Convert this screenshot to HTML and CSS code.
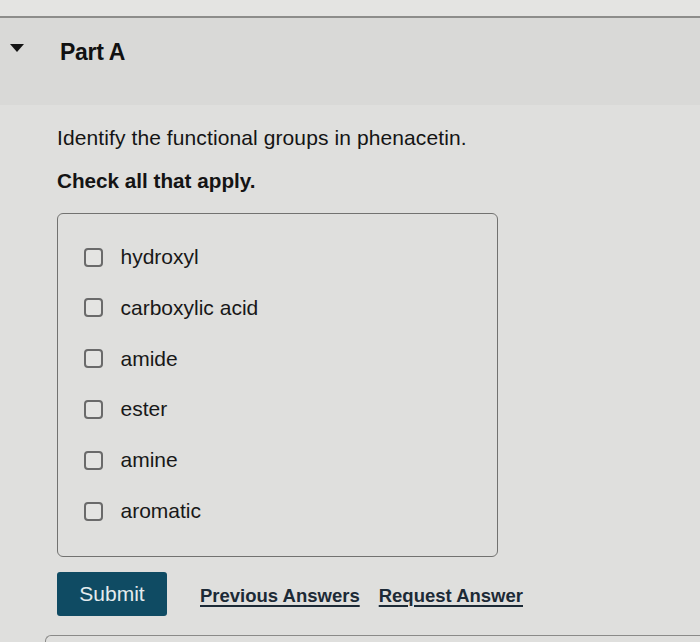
FILE: index.html
```html
<!DOCTYPE html>
<html>
<head>
<meta charset="utf-8">
<link rel="stylesheet" href="styles.css">
</head>
<body>
<div class="topstrip"></div>
<div class="header">
  <span class="caret"></span>
  <h2 class="title">Part A</h2>
</div>
<div class="content">
  <p class="question">Identify the functional groups in phenacetin.</p>
  <p class="instruction">Check all that apply.</p>
  <div class="options">
    <label class="option"><span class="box"></span><span class="label">hydroxyl</span></label>
    <label class="option"><span class="box"></span><span class="label">carboxylic acid</span></label>
    <label class="option"><span class="box"></span><span class="label">amide</span></label>
    <label class="option"><span class="box"></span><span class="label">ester</span></label>
    <label class="option"><span class="box"></span><span class="label">amine</span></label>
    <label class="option"><span class="box"></span><span class="label">aromatic</span></label>
  </div>
  <div class="actions">
    <button class="submit">Submit</button>
    <a class="link first" href="#">Previous Answers</a>
    <a class="link" href="#">Request Answer</a>
  </div>
  <div class="nextbox"></div>
</div>
</body>
</html>
```

FILE: styles.css
```css
html, body {
  margin: 0;
  padding: 0;
}
body {
  width: 700px;
  height: 642px;
  overflow: hidden;
  background: #dfdfdd;
  font-family: "Liberation Sans", Arial, sans-serif;
  color: #141414;
}
.topstrip {
  height: 16px;
  background: #e4e4e2;
  border-bottom: 2px solid #8d8d8b;
}
.header {
  height: 87px;
  box-sizing: border-box;
  padding: 21px 0 0 10px;
  display: flex;
  align-items: flex-start;
  background: #d9d9d7;
}
.caret {
  width: 0;
  height: 0;
  margin-top: 5px;
  border-left: 7px solid transparent;
  border-right: 7px solid transparent;
  border-top: 8px solid #141414;
}
.title {
  margin: 0 0 0 36px;
  font-size: 23px;
  line-height: 26px;
  font-weight: bold;
  letter-spacing: -0.3px;
  color: #111111;
}
.content {
  padding: 20px 0 0 57px;
}
.question {
  margin: 0;
  font-size: 21px;
  line-height: 26px;
  letter-spacing: 0.1px;
}
.instruction {
  margin: 17px 0 0 0;
  font-size: 20.7px;
  line-height: 26px;
  font-weight: bold;
}
.options {
  margin-top: 19px;
  width: 441px;
  box-sizing: border-box;
  border: 1.5px solid #727270;
  border-radius: 6px;
  padding: 17.7px 0 20px 25.5px;
}
.option {
  height: 50.8px;
  display: flex;
  align-items: center;
}
.box {
  width: 19px;
  height: 19px;
  box-sizing: border-box;
  border: 2px solid #6a6a6a;
  border-radius: 4px;
  margin-right: 18px;
  background: #e4e4e2;
}
.label {
  font-size: 21px;
  line-height: 26px;
  color: #181818;
}
.actions {
  margin-top: 15px;
  display: flex;
  align-items: center;
}
.submit {
  width: 110px;
  height: 44px;
  border: none;
  border-radius: 3px;
  background: #0f4b63;
  color: #e4ebee;
  font-family: "Liberation Sans", Arial, sans-serif;
  font-size: 21px;
  padding: 0;
}
.link {
  margin-left: 19px;
  margin-top: 3px;
  font-size: 18.5px;
  font-weight: bold;
  color: #1c2a36;
  text-decoration: underline;
  text-decoration-thickness: 2px;
  text-underline-offset: 3px;
}
.link.first {
  margin-left: 33px;
}
.nextbox {
  margin-top: 19px;
  margin-left: -12px;
  height: 30px;
  border: 1.5px solid #8a8a88;
  border-bottom: none;
  border-right: none;
  border-radius: 6px 0 0 0;
}
```
